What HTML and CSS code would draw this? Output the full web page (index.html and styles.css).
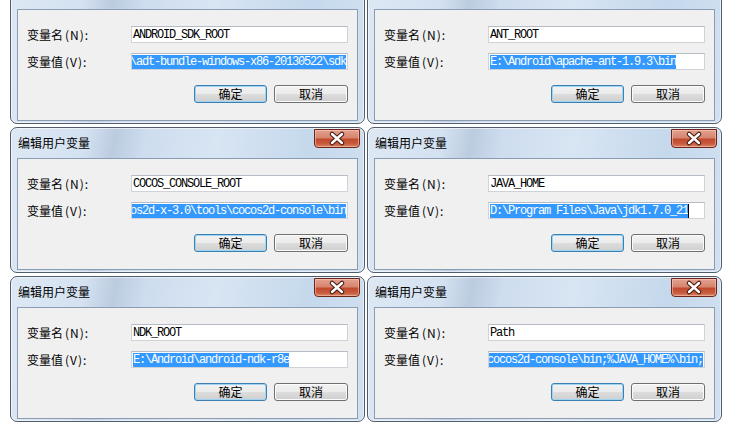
FILE: index.html
```html
<!DOCTYPE html>
<html lang="zh-CN">
<head>
    <meta charset="UTF-8">
    <meta name="viewport" content="width=device-width, initial-scale=1.0">
    <title>编辑用户变量</title>
    <link rel="stylesheet" href="styles.css">
</head>
<body>

    <div class="desk">

        <!-- row 1 -->
        <div class="dialog">
            <div class="titlebar">
                <span class="title">编辑用户变量</span>
                <button class="close" aria-label="关闭"><svg width="46" height="19" viewBox="0 0 46 19"><path d="M18 5 L28 14 M28 5 L18 14" stroke="#4a1c14" stroke-width="4.6" stroke-linecap="round"/><path d="M18 5 L28 14 M28 5 L18 14" stroke="#fff" stroke-width="2.4" stroke-linecap="round"/></svg></button>
            </div>
            <div class="client">
                <div class="field">
                    <label>变量名<span class="key">(N):</span></label>
                    <div class="textbox">ANDROID_SDK_ROOT</div>
                </div>
                <div class="field">
                    <label>变量值<span class="key">(V):</span></label>
                    <div class="textbox scrolled"><span class="sel">E:\Android\adt-bundle-windows-x86-20130522\sdk</span></div>
                </div>
                <div class="actions">
                    <button class="btn default">确定</button>
                    <button class="btn">取消</button>
                </div>
            </div>
        </div>

        <div class="dialog">
            <div class="titlebar">
                <span class="title">编辑用户变量</span>
                <button class="close" aria-label="关闭"><svg width="46" height="19" viewBox="0 0 46 19"><path d="M18 5 L28 14 M28 5 L18 14" stroke="#4a1c14" stroke-width="4.6" stroke-linecap="round"/><path d="M18 5 L28 14 M28 5 L18 14" stroke="#fff" stroke-width="2.4" stroke-linecap="round"/></svg></button>
            </div>
            <div class="client">
                <div class="field">
                    <label>变量名<span class="key">(N):</span></label>
                    <div class="textbox">ANT_ROOT</div>
                </div>
                <div class="field">
                    <label>变量值<span class="key">(V):</span></label>
                    <div class="textbox"><span class="sel">E:\Android\apache-ant-1.9.3\bin</span></div>
                </div>
                <div class="actions">
                    <button class="btn default">确定</button>
                    <button class="btn">取消</button>
                </div>
            </div>
        </div>

        <!-- row 2 -->
        <div class="dialog">
            <div class="titlebar">
                <span class="title">编辑用户变量</span>
                <button class="close" aria-label="关闭"><svg width="46" height="19" viewBox="0 0 46 19"><path d="M18 5 L28 14 M28 5 L18 14" stroke="#4a1c14" stroke-width="4.6" stroke-linecap="round"/><path d="M18 5 L28 14 M28 5 L18 14" stroke="#fff" stroke-width="2.4" stroke-linecap="round"/></svg></button>
            </div>
            <div class="client">
                <div class="field">
                    <label>变量名<span class="key">(N):</span></label>
                    <div class="textbox">COCOS_CONSOLE_ROOT</div>
                </div>
                <div class="field">
                    <label>变量值<span class="key">(V):</span></label>
                    <div class="textbox scrolled"><span class="sel">E:\cocos2d-x-3.0\tools\cocos2d-console\bin</span></div>
                </div>
                <div class="actions">
                    <button class="btn default">确定</button>
                    <button class="btn">取消</button>
                </div>
            </div>
        </div>

        <div class="dialog">
            <div class="titlebar">
                <span class="title">编辑用户变量</span>
                <button class="close" aria-label="关闭"><svg width="46" height="19" viewBox="0 0 46 19"><path d="M18 5 L28 14 M28 5 L18 14" stroke="#4a1c14" stroke-width="4.6" stroke-linecap="round"/><path d="M18 5 L28 14 M28 5 L18 14" stroke="#fff" stroke-width="2.4" stroke-linecap="round"/></svg></button>
            </div>
            <div class="client">
                <div class="field">
                    <label>变量名<span class="key">(N):</span></label>
                    <div class="textbox">JAVA_HOME</div>
                </div>
                <div class="field">
                    <label>变量值<span class="key">(V):</span></label>
                    <div class="textbox"><span class="sel">D:\Program Files\Java\jdk1.7.0_21</span><span class="caret"></span></div>
                </div>
                <div class="actions">
                    <button class="btn default">确定</button>
                    <button class="btn">取消</button>
                </div>
            </div>
        </div>

        <!-- row 3 -->
        <div class="dialog">
            <div class="titlebar">
                <span class="title">编辑用户变量</span>
                <button class="close" aria-label="关闭"><svg width="46" height="19" viewBox="0 0 46 19"><path d="M18 5 L28 14 M28 5 L18 14" stroke="#4a1c14" stroke-width="4.6" stroke-linecap="round"/><path d="M18 5 L28 14 M28 5 L18 14" stroke="#fff" stroke-width="2.4" stroke-linecap="round"/></svg></button>
            </div>
            <div class="client">
                <div class="field">
                    <label>变量名<span class="key">(N):</span></label>
                    <div class="textbox">NDK_ROOT</div>
                </div>
                <div class="field">
                    <label>变量值<span class="key">(V):</span></label>
                    <div class="textbox"><span class="sel">E:\Android\android-ndk-r8e</span></div>
                </div>
                <div class="actions">
                    <button class="btn default">确定</button>
                    <button class="btn">取消</button>
                </div>
            </div>
        </div>

        <div class="dialog">
            <div class="titlebar">
                <span class="title">编辑用户变量</span>
                <button class="close" aria-label="关闭"><svg width="46" height="19" viewBox="0 0 46 19"><path d="M18 5 L28 14 M28 5 L18 14" stroke="#4a1c14" stroke-width="4.6" stroke-linecap="round"/><path d="M18 5 L28 14 M28 5 L18 14" stroke="#fff" stroke-width="2.4" stroke-linecap="round"/></svg></button>
            </div>
            <div class="client">
                <div class="field">
                    <label>变量名<span class="key">(N):</span></label>
                    <div class="textbox">Path</div>
                </div>
                <div class="field">
                    <label>变量值<span class="key">(V):</span></label>
                    <div class="textbox scrolled"><span class="sel">%ANT_ROOT%;E:\cocos2d-x-3.0\tools\cocos2d-console\bin;%JAVA_HOME%\bin;</span></div>
                </div>
                <div class="actions">
                    <button class="btn default">确定</button>
                    <button class="btn">取消</button>
                </div>
            </div>
        </div>

    </div>

</body>
</html>
```

FILE: styles.css
```css
* {
    box-sizing: border-box;
}

body {
    margin: 0;
    background: #fff;
    overflow: hidden;
    font-family: "Noto Sans CJK SC", sans-serif;
    font-size: 12px;
    color: #000;
}

.desk {
    display: grid;
    grid-template-columns: 355px 355px;
    grid-auto-rows: 146px;
    gap: 3px 2px;
    padding-left: 10px;
    margin-top: -22px;
}

/* aero window frame */
.dialog {
    display: flex;
    flex-direction: column;
    border: 1px solid #4f5d6d;
    border-radius: 7px;
    overflow: hidden;
    background:
        linear-gradient(100deg, rgba(255,255,255,0) 20%, rgba(150,170,195,0.35) 28%, rgba(255,255,255,0) 36%),
        linear-gradient(100deg, #dde8f4 0%, #cddcee 35%, #d8e5f3 55%, #c5d8ec 80%, #d2e1f1 100%);
    box-shadow: inset 0 0 0 1px rgba(255, 255, 255, 0.55);
}

.titlebar {
    height: 30px;
    display: flex;
    justify-content: space-between;
    align-items: center;
    padding: 0 4px 0 7px;
}

.title {
    line-height: 14px;
}

.close {
    align-self: flex-start;
    width: 46px;
    height: 19px;
    margin-top: 1px;
    padding: 0;
    border: 1px solid #6e2618;
    border-radius: 0 0 4px 4px;
    background: linear-gradient(#e3a291 0%, #d6856e 45%, #c14a2e 55%, #c85a3d 80%, #d98664 100%);
    box-shadow: inset 0 0 0 1px rgba(255, 210, 195, 0.5);
    display: flex;
}

.close svg {
    display: block;
    margin: -1px;
}

.client {
    flex: 1;
    margin: 0 6px 2px 6px;
    background: #f0f0f0;
    border: 1px solid #8b9db3;
    padding: 16px 9px 0 9px;
}

.field {
    display: flex;
    align-items: center;
    height: 17px;
}

.field + .field {
    margin-top: 10px;
}

.field label {
    width: 104px;
    line-height: 14px;
}

.key {
    margin-left: 2px;
    letter-spacing: 1px;
}

.textbox {
    width: 217px;
    height: 17px;
    background: #fff;
    border: 1px solid #cfd3d9;
    border-top-color: #b6bcc4;
    padding: 0 1px;
    display: flex;
    align-items: center;
    overflow: hidden;
    white-space: nowrap;
    font-family: "Liberation Mono", monospace;
    font-size: 12px;
    letter-spacing: -1.2px;
    line-height: 14px;
}

.textbox.scrolled {
    justify-content: flex-end;
}

.sel {
    flex-shrink: 0;
    background: #3399ff;
    color: #fff;
    height: 14px;
}

.caret {
    flex-shrink: 0;
    width: 1px;
    height: 14px;
    background: #000;
}

.actions {
    display: flex;
    justify-content: flex-end;
    gap: 7px;
    margin-top: 15px;
}

.btn {
    width: 74px;
    height: 18px;
    padding: 0;
    border: 1px solid #707070;
    border-radius: 3px;
    background: linear-gradient(#f2f2f2 0%, #ebebeb 50%, #dddddd 50%, #cfcfcf 100%);
    box-shadow: inset 0 0 0 1px #fbfbfb;
    font-family: "Noto Sans CJK SC", sans-serif;
    font-size: 12px;
    line-height: 14px;
    color: #000;
}

.btn.default {
    width: 73px;
    border-color: #3c7fb1;
    box-shadow: inset 0 0 0 1px #9fd5f4;
}
```
